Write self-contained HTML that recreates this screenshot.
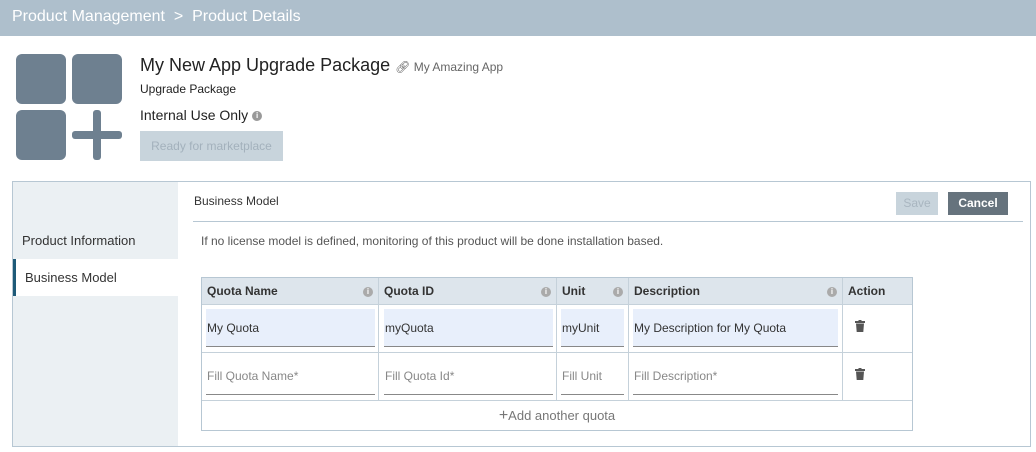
<!DOCTYPE html>
<html><head><style>
*{box-sizing:border-box;margin:0;padding:0}
body{width:1036px;height:452px;background:#fff;font-family:"Liberation Sans",sans-serif;color:#222;position:relative;overflow:hidden}
.abs{position:absolute}
.hdr{left:0;top:0;width:1036px;height:36px;background:#aebfcc;color:#fff;font-size:16px;line-height:34px;padding-left:12px}
.sq{background:#6e8090;border-radius:6px;width:50px;height:50px}
.info{display:inline-block;width:10px;height:10px;border-radius:50%;background:#999;color:#fff;font-size:8px;line-height:10px;text-align:center;font-weight:bold;vertical-align:middle}
.th{position:absolute;top:0;height:27px;font-size:12px;font-weight:bold;line-height:27px;padding-left:5px;color:#333}
.th .info{position:absolute;right:6px;top:9px;background:#aaa}
.inp{position:absolute;height:38px;border-bottom:1px solid #888;font-size:12px;line-height:38px;padding-left:1px}
.fill{background:#e8effb;color:#333}
.ph{color:#888}
.vl{position:absolute;top:0;width:1px;height:123px;background:#c5d1da}
.trash{position:absolute;width:10px;height:12px}
</style></head><body>
<div class="abs hdr">Product Management &nbsp;&gt;&nbsp; Product Details</div>
<div class="abs sq" style="left:16px;top:54px"></div>
<div class="abs sq" style="left:72px;top:54px"></div>
<div class="abs sq" style="left:16px;top:110px"></div>
<div class="abs" style="left:72px;top:131px;width:50px;height:8px;background:#6e8090;border-radius:3px"></div>
<div class="abs" style="left:93px;top:110px;width:8px;height:50px;background:#6e8090;border-radius:3px"></div>
<div class="abs" style="left:140px;top:55px;font-size:18px;color:#222">My New App Upgrade Package <span style="font-size:12px;color:#666">&#128279;&#xFE0E; My Amazing App</span></div>
<div class="abs" style="left:140px;top:82px;font-size:12px">Upgrade Package</div>
<div class="abs" style="left:140px;top:107px;font-size:14px">Internal Use Only <span class="info">i</span></div>
<div class="abs" style="left:140px;top:131px;width:143px;height:30px;background:#c8d4dc;color:#a3b1bc;font-size:12px;line-height:30px;text-align:center">Ready for marketplace</div>

<div class="abs" style="left:12px;top:181px;width:1019px;height:266px;border:1px solid #b7c7d3"></div>
<div class="abs" style="left:13px;top:182px;width:165px;height:264px;background:#ebf0f3"></div>
<div class="abs" style="left:22px;top:233px;font-size:13px;color:#333">Product Information</div>
<div class="abs" style="left:13px;top:259px;width:165px;height:37px;background:#fff;border-left:3px solid #1e5a78;font-size:13px;line-height:37px;padding-left:9px;color:#333">Business Model</div>

<div class="abs" style="left:194px;top:194px;font-size:12px;color:#333">Business Model</div>
<div class="abs" style="left:193px;top:221px;width:830px;height:1px;background:#b7c7d3"></div>
<div class="abs" style="left:896px;top:192px;width:42px;height:23px;background:#c8d4dc;color:#a9b6c0;font-size:12px;line-height:23px;text-align:center">Save</div>
<div class="abs" style="left:948px;top:192px;width:60px;height:23px;background:#66737d;color:#fff;font-size:12px;font-weight:bold;line-height:23px;text-align:center">Cancel</div>
<div class="abs" style="left:201px;top:234px;font-size:12px;color:#555">If no license model is defined, monitoring of this product will be done installation based.</div>

<div class="abs" style="left:201px;top:277px;width:712px;height:154px;border:1px solid #b7c7d3">
 <div class="abs" style="left:0;top:0;width:710px;height:27px;background:#dde5ec;border-bottom:1px solid #c5d1da"></div>
 <div class="th" style="left:0;width:177px">Quota Name<span class="info">i</span></div>
 <div class="th" style="left:177px;width:178px">Quota ID<span class="info">i</span></div>
 <div class="th" style="left:355px;width:72px">Unit<span class="info">i</span></div>
 <div class="th" style="left:427px;width:214px">Description<span class="info">i</span></div>
 <div class="th" style="left:641px;width:70px">Action</div>
 <div class="vl" style="left:176px"></div><div class="vl" style="left:354px"></div><div class="vl" style="left:426px"></div><div class="vl" style="left:640px"></div>
 <div class="abs" style="left:0;top:74px;width:710px;height:1px;background:#c5d1da"></div>
 <div class="abs" style="left:0;top:122px;width:710px;height:1px;background:#c5d1da"></div>
 <div class="inp fill" style="left:4px;top:31px;width:169px">My Quota</div>
 <div class="inp fill" style="left:182px;top:31px;width:169px">myQuota</div>
 <div class="inp fill" style="left:359px;top:31px;width:63px">myUnit</div>
 <div class="inp fill" style="left:431px;top:31px;width:205px">My Description for My Quota</div>
 <div class="inp ph" style="left:4px;top:79px;width:169px">Fill Quota Name*</div>
 <div class="inp ph" style="left:182px;top:79px;width:169px">Fill Quota Id*</div>
 <div class="inp ph" style="left:359px;top:79px;width:63px">Fill Unit</div>
 <div class="inp ph" style="left:431px;top:79px;width:205px">Fill Description*</div>
 <svg class="trash" style="left:653px;top:42px" viewBox="0 0 10 12"><rect x="0" y="1" width="10" height="2" fill="#555"/><rect x="3.5" y="0" width="3" height="1.5" fill="#555"/><path d="M1 3.5h8l-.7 8.5H1.7z" fill="#555"/></svg>
 <svg class="trash" style="left:653px;top:90px" viewBox="0 0 10 12"><rect x="0" y="1" width="10" height="2" fill="#555"/><rect x="3.5" y="0" width="3" height="1.5" fill="#555"/><path d="M1 3.5h8l-.7 8.5H1.7z" fill="#555"/></svg>
 <div class="abs" style="left:0;top:123px;width:710px;height:30px;text-align:center;line-height:29px;font-size:13px;color:#777"><span style="font-size:16px">+</span>Add another quota</div>
</div>
</body></html>
